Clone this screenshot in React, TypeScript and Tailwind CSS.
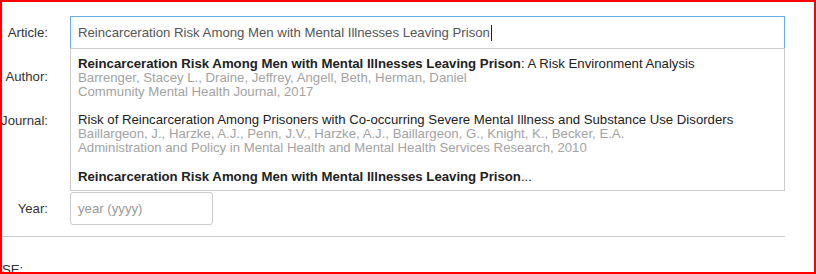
import React from "react";

const items = [
  {
    bold: "Reincarceration Risk Among Men with Mental Illnesses Leaving Prison",
    rest: ": A Risk Environment Analysis",
    authors: "Barrenger, Stacey L., Draine, Jeffrey, Angell, Beth, Herman, Daniel",
    journal: "Community Mental Health Journal, 2017",
  },
  {
    bold: "",
    rest: "Risk of Reincarceration Among Prisoners with Co-occurring Severe Mental Illness and Substance Use Disorders",
    authors: "Baillargeon, J., Harzke, A.J., Penn, J.V., Harzke, A.J., Baillargeon, G., Knight, K., Becker, E.A.",
    journal: "Administration and Policy in Mental Health and Mental Health Services Research, 2010",
  },
];

function Row({ label, children }: { label: string; children?: React.ReactNode }) {
  return (
    <div className="flex items-center gap-[22px] h-[33px]">
      <div className="w-[48px] flex justify-end whitespace-nowrap text-[#333]">{label}</div>
      {children}
    </div>
  );
}

export default function App() {
  return (
    <div
      className="relative w-[816px] h-[274px] overflow-hidden bg-white text-[13.2px] leading-[15px]"
      style={{ fontFamily: '"Liberation Sans", Arial, sans-serif' }}
    >
      <div className="flex flex-col gap-[11px] pt-[16px]">
        <Row label="Article:">
          <div className="relative">
            <div className="w-[715px] h-[33px] border border-[#66afe9] flex items-center pl-[7px] text-[#555]">
              <span>Reincarceration Risk Among Men with Mental Illnesses Leaving Prison</span>
              <span className="inline-block w-px h-[16px] bg-[#222] ml-px" />
            </div>
            <div className="absolute left-0 top-[32px] z-10 w-[715px] border border-[#ccc] bg-white leading-[14px]">
              {items.map((it, i) => (
                <div key={i} className="px-[7px] pt-[8px] pb-[6px]">
                  <div className="text-[#222] whitespace-nowrap">
                    {it.bold && <span className="font-bold">{it.bold}</span>}
                    <span>{it.rest}</span>
                  </div>
                  <div className="text-[#a3a3a3] whitespace-nowrap">{it.authors}</div>
                  <div className="text-[#a3a3a3] whitespace-nowrap">{it.journal}</div>
                </div>
              ))}
              <div className="px-[7px] pt-[9px] pb-[6px] text-[#222] whitespace-nowrap">
                <span className="font-bold">
                  Reincarceration Risk Among Men with Mental Illnesses Leaving Prison
                </span>
                <span>...</span>
              </div>
            </div>
          </div>
        </Row>
        <Row label="Author:">
          <div className="w-[715px] h-[33px] border border-[#ccc] rounded-[3px]" />
        </Row>
        <Row label="Journal:">
          <div className="w-[715px] h-[33px] border border-[#ccc] rounded-[3px]" />
        </Row>
        <Row label="">
          <div className="w-[715px] h-[33px] border border-[#ccc] rounded-[3px]" />
        </Row>
        <Row label="Year:">
          <div className="w-[143px] h-[33px] border border-[#ccc] rounded-[3px] flex items-center pl-[7px] text-[#999]">
            year (yyyy)
          </div>
        </Row>
        <div className="w-[785px] border-t border-[#ccc]" />
      </div>
      <div className="pl-[2px] pt-[25px] text-[#333]">SE:</div>
      <div className="pointer-events-none absolute inset-0 border-2 border-[#ff0000]" />
    </div>
  );
}
